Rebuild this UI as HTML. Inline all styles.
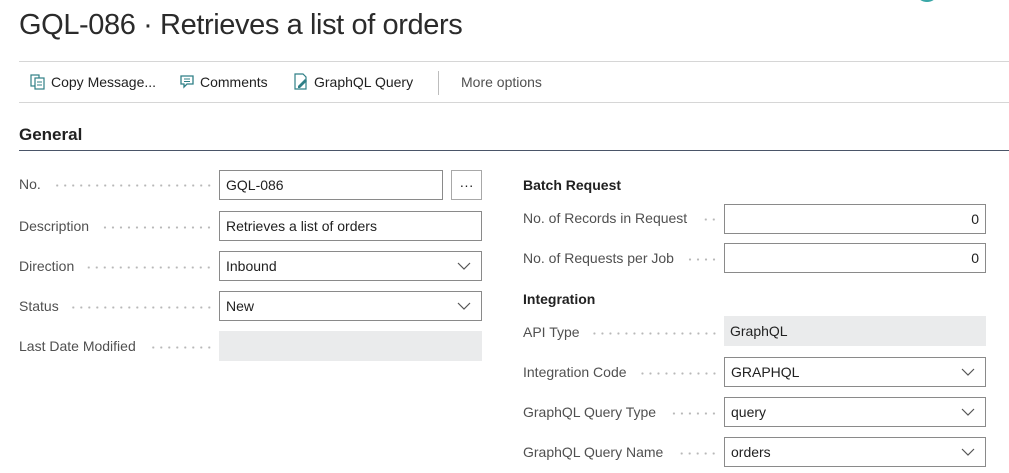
<!DOCTYPE html>
<html><head><meta charset="utf-8"><style>
*{box-sizing:border-box;margin:0;padding:0}
body{width:1009px;height:473px;background:#fff;font-family:"Liberation Sans",sans-serif;color:#212121;position:relative;overflow:hidden}
.a{position:absolute}
.title{left:19px;top:9px;font-size:29px;color:#2b2b2b;letter-spacing:-0.4px}
.hl{height:1px;background:#d6d6d6;left:19px;right:0}
.tb{top:74px;font-size:14px;color:#212121;white-space:nowrap}
.lab{font-size:14px;color:#505050;white-space:nowrap;display:flex;align-items:center}
.dots{flex:1;height:3px;margin:0 6px 0 12px;position:relative;top:1px;background-image:radial-gradient(circle,#b8b8b8 0.9px,transparent 1.3px);background-size:8px 3px;background-position:right center}
.box{border:1px solid #8a8a8a;height:30px;font-size:14px;padding:0 6px;display:flex;align-items:center;background:#fff}
.grey{background:#eaebec;border:none}
.chev{position:absolute;right:10px;top:9px}
.hdr{font-size:14px;font-weight:bold;color:#212121}
</style></head><body>
<svg class="a" style="left:912px;top:-12px" width="30" height="18"><circle cx="15" cy="2" r="11" fill="none" stroke="#3aa7a7" stroke-width="2"/></svg>
<div class="a title">GQL-086 · Retrieves a list of orders</div>
<div class="a hl" style="top:61px"></div>
<div class="a hl" style="top:102px"></div>
<svg class="a" style="left:30px;top:74px" width="16" height="16"><rect x="1" y="1" width="8" height="11" fill="none" stroke="#2f7f86" stroke-width="1.2"/><rect x="5" y="4" width="9" height="11" fill="#fff" stroke="#2f7f86" stroke-width="1.2"/><path d="M7 8h5M7 11h5" stroke="#2f7f86"/></svg>
<div class="a tb" style="left:51px">Copy Message...</div>
<svg class="a" style="left:179px;top:74px" width="16" height="16"><path d="M2 2h12v8H8l-3 3v-3H2z" fill="none" stroke="#2f7f86" stroke-width="1.3"/><path d="M5 5h6M5 7.5h6" stroke="#2f7f86"/></svg>
<div class="a tb" style="left:200px">Comments</div>
<svg class="a" style="left:293px;top:73px" width="16" height="17"><path d="M2 1h8l3 3v12H2z" fill="none" stroke="#2f7f86" stroke-width="1.2"/><path d="M5 13l7-7 2 2-7 7H5z" fill="#2f7f86"/></svg>
<div class="a tb" style="left:314px">GraphQL Query</div>
<div class="a" style="left:438px;top:71px;width:1px;height:24px;background:#bdbdbd"></div>
<div class="a tb" style="left:461px;color:#505050">More options</div>
<div class="a" style="left:19px;top:125px;font-size:17px;font-weight:bold;color:#212121">General</div>
<div class="a" style="left:19px;top:150px;right:0;height:1px;background:#4a5568"></div>

<div class="a lab" style="left:19px;top:176px;width:200px">No.<span class="dots"></span></div>
<div class="a box" style="left:219px;top:170px;width:224px">GQL-086</div>
<div class="a box" style="left:451px;top:170px;width:31px;justify-content:center;border-color:#a8a8a8">···</div>
<div class="a lab" style="left:19px;top:218px;width:200px">Description<span class="dots"></span></div>
<div class="a box" style="left:219px;top:211px;width:263px">Retrieves a list of orders</div>
<div class="a lab" style="left:19px;top:258px;width:200px">Direction<span class="dots"></span></div>
<div class="a box" style="left:219px;top:251px;width:263px">Inbound<svg class="chev" width="14" height="10"><path d="M1 2l6 6 6-6" fill="none" stroke="#555" stroke-width="1.2"/></svg></div>
<div class="a lab" style="left:19px;top:298px;width:200px">Status<span class="dots"></span></div>
<div class="a box" style="left:219px;top:291px;width:263px">New<svg class="chev" width="14" height="10"><path d="M1 2l6 6 6-6" fill="none" stroke="#555" stroke-width="1.2"/></svg></div>
<div class="a lab" style="left:19px;top:338px;width:200px">Last Date Modified<span class="dots"></span></div>
<div class="a box grey" style="left:219px;top:331px;width:263px"></div>

<div class="a hdr" style="left:523px;top:177px">Batch Request</div>
<div class="a lab" style="left:523px;top:210px;width:201px">No. of Records in Request<span class="dots"></span></div>
<div class="a box" style="left:724px;top:204px;width:262px;justify-content:flex-end">0</div>
<div class="a lab" style="left:523px;top:250px;width:201px">No. of Requests per Job<span class="dots"></span></div>
<div class="a box" style="left:724px;top:243px;width:262px;justify-content:flex-end">0</div>
<div class="a hdr" style="left:523px;top:291px">Integration</div>
<div class="a lab" style="left:523px;top:324px;width:201px">API Type<span class="dots"></span></div>
<div class="a box grey" style="left:724px;top:316px;width:262px">GraphQL</div>
<div class="a lab" style="left:523px;top:364px;width:201px">Integration Code<span class="dots"></span></div>
<div class="a box" style="left:724px;top:357px;width:262px">GRAPHQL<svg class="chev" width="14" height="10"><path d="M1 2l6 6 6-6" fill="none" stroke="#555" stroke-width="1.2"/></svg></div>
<div class="a lab" style="left:523px;top:404px;width:201px">GraphQL Query Type<span class="dots"></span></div>
<div class="a box" style="left:724px;top:397px;width:262px">query<svg class="chev" width="14" height="10"><path d="M1 2l6 6 6-6" fill="none" stroke="#555" stroke-width="1.2"/></svg></div>
<div class="a lab" style="left:523px;top:444px;width:201px">GraphQL Query Name<span class="dots"></span></div>
<div class="a box" style="left:724px;top:437px;width:262px">orders<svg class="chev" width="14" height="10"><path d="M1 2l6 6 6-6" fill="none" stroke="#555" stroke-width="1.2"/></svg></div>
</body></html>
